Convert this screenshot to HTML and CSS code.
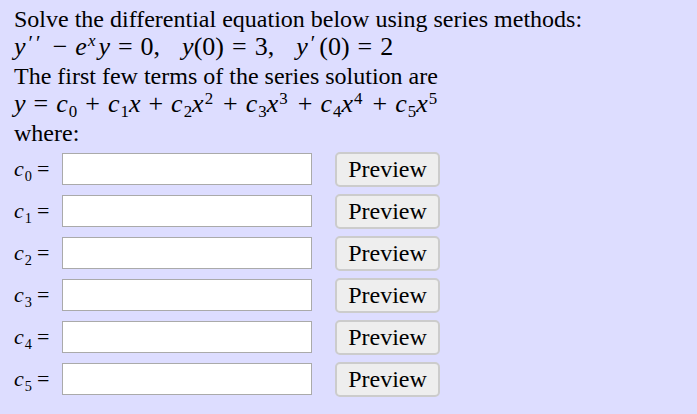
FILE: index.html
```html
<!DOCTYPE html>
<html lang="en">
<head>
    <meta charset="UTF-8">
    <title>Series Solution</title>
    <link rel="stylesheet" href="styles.css">
</head>
<body>
    <div class="problem">
        <p class="line">Solve the differential equation below using series methods:</p>
        <p class="line math"><i>y</i><span class="pr">&#8242;&#8242;</span><span class="op">&minus;</span><i>e</i><sup class="sx"><i>x</i></sup><i>y</i><span class="op">=</span>0,<span class="gap"></span><i>y</i>(0)<span class="op">=</span>3,<span class="gap"></span><i>y</i><span class="pr">&#8242;</span>(0)<span class="op">=</span>2</p>
        <p class="line">The first few terms of the series solution are</p>
        <p class="line math"><i>y</i><span class="op">=</span><i>c</i><sub>0</sub><span class="op">+</span><i>c</i><sub>1</sub><i>x</i><span class="op">+</span><i>c</i><sub>2</sub><i>x</i><sup>2</sup><span class="op">+</span><i>c</i><sub>3</sub><i>x</i><sup>3</sup><span class="op">+</span><i>c</i><sub>4</sub><i>x</i><sup>4</sup><span class="op">+</span><i>c</i><sub>5</sub><i>x</i><sup>5</sup></p>
        <p class="line">where:</p>

        <div class="answers">
            <div class="answer-row">
                <span class="label"><i>c</i><sub>0</sub><span class="eq">=</span></span>
                <input type="text" class="answer">
                <button class="preview">Preview</button>
            </div>
            <div class="answer-row">
                <span class="label"><i>c</i><sub>1</sub><span class="eq">=</span></span>
                <input type="text" class="answer">
                <button class="preview">Preview</button>
            </div>
            <div class="answer-row">
                <span class="label"><i>c</i><sub>2</sub><span class="eq">=</span></span>
                <input type="text" class="answer">
                <button class="preview">Preview</button>
            </div>
            <div class="answer-row">
                <span class="label"><i>c</i><sub>3</sub><span class="eq">=</span></span>
                <input type="text" class="answer">
                <button class="preview">Preview</button>
            </div>
            <div class="answer-row">
                <span class="label"><i>c</i><sub>4</sub><span class="eq">=</span></span>
                <input type="text" class="answer">
                <button class="preview">Preview</button>
            </div>
            <div class="answer-row">
                <span class="label"><i>c</i><sub>5</sub><span class="eq">=</span></span>
                <input type="text" class="answer">
                <button class="preview">Preview</button>
            </div>
        </div>
    </div>
</body>
</html>
```

FILE: styles.css
```css
body {
    margin: 0;
    padding: 0;
    background-color: #ddddff;
    font-family: "Liberation Serif", "Times New Roman", serif;
    font-size: 24px;
    color: #000000;
}
.problem {
    padding: 5px 14px 0 14px;
}
.line {
    margin: 0;
    line-height: 28.4px;
    white-space: nowrap;
}
.math {
    font-size: 26px;
}
.math i, .label i {
    font-family: "Liberation Serif", serif;
    font-style: italic;
}
.op {
    margin: 0 8px;
}
.gap {
    display: inline-block;
    width: 22px;
}
.pr {
    display: inline-block;
    letter-spacing: 3px;
    margin: 0 1px 0 3px;
    font-size: 80%;
    vertical-align: 5px;
    line-height: 0;
}
sub, sup {
    font-size: 65%;
    line-height: 0;
    font-style: normal;
}
sub {
    vertical-align: -5px;
    margin-left: 1px;
}
sup {
    vertical-align: 8px;
    margin-left: 1px;
    margin-right: 2px;
}
.sx {
    vertical-align: 9px;
    margin-right: 3px;
}
.answers {
    margin-top: 1px;
}
.answer-row {
    display: flex;
    align-items: center;
    height: 42px;
}
.label {
    width: 48px;
    font-size: 22px;
    line-height: 1;
    white-space: nowrap;
}
.eq {
    margin-left: 5px;
}
.answer {
    width: 250px;
    height: 32px;
    box-sizing: border-box;
    border: 1px solid #aaaaaa;
    background-color: #ffffff;
    margin: 0;
    padding: 2px 4px;
}
.preview {
    margin-left: 23px;
    width: 105px;
    height: 35px;
    box-sizing: border-box;
    background-color: #eeeeee;
    border: 2px solid #cccccc;
    border-radius: 5px;
    font-family: "Liberation Serif", "Times New Roman", serif;
    font-size: 24px;
    color: #000000;
    padding: 0;
}
```
